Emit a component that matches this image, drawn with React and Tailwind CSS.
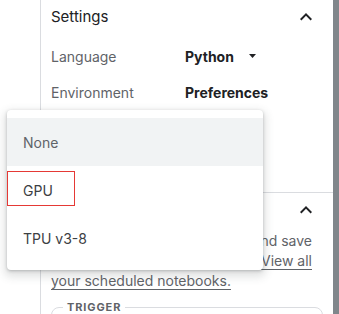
import React from "react";

function ChevronUp() {
  return (
    <svg width="24" height="24" viewBox="0 0 24 24" className="block">
      <path d="M7.41 15.41L12 10.83l4.59 4.58L18 14l-6-6-6 6z" fill="#202124" />
    </svg>
  );
}

export default function App() {
  return (
    <div
      className="relative w-[339px] h-[314px] overflow-hidden bg-white flex items-start"
      style={{ fontFamily: "Inter, 'Noto Sans', sans-serif" }}
    >
      <div className="w-[40px] shrink-0" />
      <div className="flex-1 h-[314px] border-l border-[#dadce0] overflow-hidden">
        {/* Settings header */}
        <div className="h-[34px] flex items-center justify-between pl-[10px] pr-[15px]">
          <span className="text-[15px] text-[#202124]">Settings</span>
          <ChevronUp />
        </div>
        <div className="h-[4px]" />
        <div className="h-[36px] flex items-center pl-[10px] text-[14px]">
          <span className="w-[134px] text-[#5f6368]">Language</span>
          <span className="font-bold text-[#202124]">Python</span>
          <svg width="8" height="4" viewBox="0 0 8 4" className="ml-[15px]">
            <path d="M0 0h7L3.5 4z" fill="#202124" />
          </svg>
        </div>
        <div className="h-[36px] flex items-center pl-[10px] text-[14px]">
          <span className="w-[134px] text-[#5f6368]">Environment</span>
          <span className="font-bold text-[#202124]">Preferences</span>
        </div>
        <div className="h-[36px] flex items-center pl-[10px] text-[14px]">
          <span className="w-[134px] text-[#5f6368]">Accelerator</span>
          <span className="font-bold text-[#202124]">None</span>
        </div>
        <div className="h-[46px]" />
        <div className="border-t border-[#dadce0]" />
        {/* Schedule header */}
        <div className="h-[34px] flex items-center justify-end pr-[15px]">
          <ChevronUp />
        </div>
        <div className="px-[10px] pt-[4px] text-[14px] leading-[20px] text-[#5f6368]">
          <div className="w-[261px] flex justify-end whitespace-nowrap">
            <span>Schedule this notebook to run and save</span>
          </div>
          <div className="w-[261px] flex justify-end whitespace-nowrap">
            <span>
              a new version regularly.{" "}
              <span className="underline underline-offset-[3px] decoration-[#5f6368]">View all</span>
            </span>
          </div>
          <div className="whitespace-nowrap">
            <span className="underline underline-offset-[3px] decoration-[#5f6368]">
              your scheduled notebooks.
            </span>
          </div>
          <fieldset className="mt-[10px] border border-[#dadce0] rounded-[8px] h-[40px] p-0 m-0">
            <legend className="ml-[11px] px-[4px] text-[11px] leading-[12px] font-bold tracking-[0.08em] text-[#5f6368]">
              TRIGGER
            </legend>
          </fieldset>
        </div>
      </div>
      <div className="w-[6px] h-[314px] shrink-0 bg-[#80868b]" />

      {/* Dropdown menu */}
      <div className="absolute left-[7px] top-[110px] w-[256px] h-[160px] bg-white rounded-[4px] py-[8px] shadow-[0_1px_3px_rgba(60,64,67,0.3),0_4px_8px_3px_rgba(60,64,67,0.15)]">
        <div className="h-[48px] flex items-center px-[16px] bg-[#f1f3f4] text-[14px] text-[#5f6368]">
          None
        </div>
        <div className="h-[48px] flex items-center px-[16px] text-[14px] text-[#3c4043]">
          GPU
        </div>
        <div className="h-[48px] flex items-center px-[16px] text-[14px] text-[#3c4043]">
          TPU v3-8
        </div>
      </div>
      {/* highlight box */}
      <div className="absolute left-[7px] top-[171px] w-[68px] h-[35px] border border-[#e53935]" />
    </div>
  );
}
